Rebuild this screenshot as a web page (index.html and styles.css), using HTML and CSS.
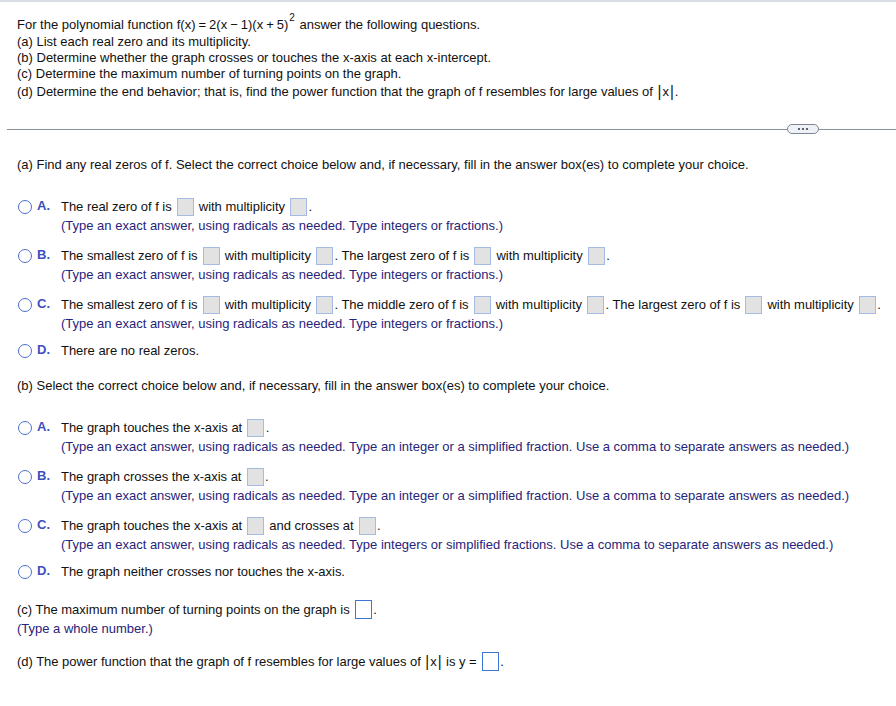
FILE: index.html
```html
<!DOCTYPE html>
<html>
<head>
<meta charset="utf-8">
<link rel="stylesheet" href="styles.css">
</head>
<body>
<div class="intro">
  <div class="line first">For the polynomial function <span class="math">f(x) = 2(x − 1)(x + 5)<sup>2</sup></span> answer the following questions.</div>
  <div class="line">(a) List each real zero and its multiplicity.</div>
  <div class="line">(b) Determine whether the graph crosses or touches the x-axis at each x-intercept.</div>
  <div class="line">(c) Determine the maximum number of turning points on the graph.</div>
  <div class="line last">(d) Determine the end behavior; that is, find the power function that the graph of f resembles for large values of <span class="abs">|</span>x<span class="abs">|</span>.</div>
</div>

<div class="divider">
  <span class="rule left"></span>
  <span class="more"><svg width="14" height="4" viewBox="0 0 14 4"><circle cx="3" cy="2" r="1.1" fill="#3a3f4a"/><circle cx="7" cy="2" r="1.1" fill="#3a3f4a"/><circle cx="11" cy="2" r="1.1" fill="#3a3f4a"/></svg></span>
  <span class="rule right"></span>
</div>

<div class="part part-a">
  <div class="prompt">(a) Find any real zeros of f. Select the correct choice below and, if necessary, fill in the answer box(es) to complete your choice.</div>
  <div class="options">
    <div class="option">
      <span class="radio"></span><span class="letter">A.</span>
      <div class="main">The real zero of f is <span class="box"></span> with multiplicity <span class="box"></span>.</div>
      <div class="hint">(Type an exact answer, using radicals as needed. Type integers or fractions.)</div>
    </div>
    <div class="option">
      <span class="radio"></span><span class="letter">B.</span>
      <div class="main">The smallest zero of f is <span class="box"></span> with multiplicity <span class="box"></span>. The largest zero of f is <span class="box"></span> with multiplicity <span class="box"></span>.</div>
      <div class="hint">(Type an exact answer, using radicals as needed. Type integers or fractions.)</div>
    </div>
    <div class="option">
      <span class="radio"></span><span class="letter">C.</span>
      <div class="main">The smallest zero of f is <span class="box"></span> with multiplicity <span class="box"></span>. The middle zero of f is <span class="box"></span> with multiplicity <span class="box"></span>. The largest zero of f is <span class="box"></span> with multiplicity <span class="box"></span>.</div>
      <div class="hint">(Type an exact answer, using radicals as needed. Type integers or fractions.)</div>
    </div>
    <div class="option">
      <span class="radio"></span><span class="letter">D.</span>
      <div class="main plain">There are no real zeros.</div>
    </div>
  </div>
</div>

<div class="part part-b">
  <div class="prompt">(b) Select the correct choice below and, if necessary, fill in the answer box(es) to complete your choice.</div>
  <div class="options">
    <div class="option">
      <span class="radio"></span><span class="letter">A.</span>
      <div class="main">The graph touches the x-axis at <span class="box"></span>.</div>
      <div class="hint">(Type an exact answer, using radicals as needed. Type an integer or a simplified fraction. Use a comma to separate answers as needed.)</div>
    </div>
    <div class="option">
      <span class="radio"></span><span class="letter">B.</span>
      <div class="main">The graph crosses the x-axis at <span class="box"></span>.</div>
      <div class="hint">(Type an exact answer, using radicals as needed. Type an integer or a simplified fraction. Use a comma to separate answers as needed.)</div>
    </div>
    <div class="option">
      <span class="radio"></span><span class="letter">C.</span>
      <div class="main">The graph touches the x-axis at <span class="box"></span> and crosses at <span class="box"></span>.</div>
      <div class="hint">(Type an exact answer, using radicals as needed. Type integers or simplified fractions. Use a comma to separate answers as needed.)</div>
    </div>
    <div class="option">
      <span class="radio"></span><span class="letter">D.</span>
      <div class="main plain">The graph neither crosses nor touches the x-axis.</div>
    </div>
  </div>
</div>

<div class="part part-c">
  <div class="main">(c) The maximum number of turning points on the graph is <span class="box open"></span>.</div>
  <div class="hint">(Type a whole number.)</div>
</div>

<div class="part part-d">
  <div class="main">(d) The power function that the graph of f resembles for large values of <span class="abs">|</span>x<span class="abs">|</span> is y = <span class="box open"></span>.</div>
</div>
</body>
</html>
```

FILE: styles.css
```css
html, body {
  margin: 0;
  padding: 0;
  background: #ffffff;
}

body {
  font-family: "Liberation Sans", Arial, sans-serif;
  font-size: 13px;
  color: #111111;
  border-top: 2px solid #d9dde4;
}

.intro {
  padding: 15px 0 0 17px;
  line-height: 16px;
}

.intro .first {
  padding-bottom: 1px;
}

.intro .last {
  padding-top: 2px;
}

.math {
  word-spacing: -0.6px;
}

sup {
  font-size: 10px;
  line-height: 0;
  vertical-align: 8px;
  margin-left: 1px;
  margin-right: 1px;
}

.abs {
  display: inline-block;
  font-size: 15px;
  line-height: 0;
  transform: scaleY(1.15);
  padding: 0 1px;
}

.divider {
  display: flex;
  align-items: center;
  height: 10px;
  margin: 24px 0 0 7px;
}

.rule {
  height: 1px;
  background: #8a919c;
}

.rule.left {
  width: 780px;
}

.rule.right {
  flex: 1;
}

.more {
  box-sizing: border-box;
  width: 32px;
  height: 10px;
  border: 1px solid #7d8694;
  border-radius: 6px;
  background: #eef1f6;
  display: flex;
  align-items: center;
  justify-content: center;
}

.more svg {
  display: block;
}

.part {
  padding-left: 17px;
}

.part-a {
  margin-top: 23px;
}

.part-b {
  margin-top: 19px;
}

.part-c {
  margin-top: 19px;
}

.part-d {
  margin-top: 14px;
}

.prompt {
  line-height: 16px;
}

.options {
  margin-top: 23px;
  display: flex;
  flex-direction: column;
  gap: 11px;
}

.option {
  display: grid;
  grid-template-columns: 19px 24px auto;
  align-items: center;
  margin-left: 1px;
}

.radio {
  grid-column: 1;
  grid-row: 1;
  box-sizing: border-box;
  width: 14px;
  height: 14px;
  border: 1.3px solid #4f6fcf;
  border-radius: 50%;
  background: #ffffff;
}

.letter {
  grid-column: 2;
  grid-row: 1;
  color: #3c4fbf;
  font-weight: bold;
  line-height: 16px;
  position: relative;
  top: -1px;
}

.main {
  grid-column: 3;
  grid-row: 1;
  height: 22px;
  line-height: 22px;
  white-space: nowrap;
  letter-spacing: -0.03px;
}

.main.plain {
  height: 16px;
  line-height: 16px;
}

.hint {
  grid-column: 3;
  grid-row: 2;
  line-height: 16px;
  color: #27247a;
  white-space: nowrap;
}

.box {
  display: inline-block;
  box-sizing: border-box;
  width: 17px;
  height: 18px;
  margin: 0 1.5px;
  vertical-align: -5px;
  background: #e2e2e2;
  border: 1px solid #a5bbe6;
}

.box.open {
  height: 19px;
  background: #ffffff;
  border: 1.3px solid #3e76d6;
}
```
